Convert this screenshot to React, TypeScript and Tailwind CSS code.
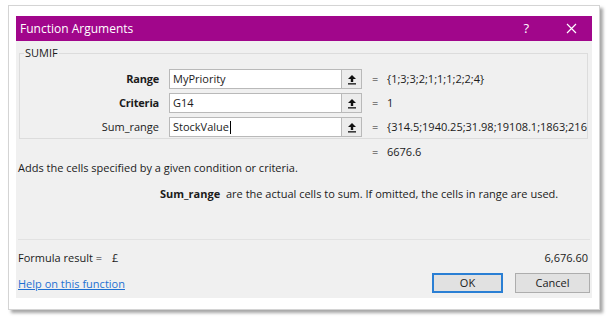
function CollapseIcon() {
  return (
    <svg width="10" height="11" viewBox="0 0 10 11" fill="none">
      <path d="M5 1 L9 5 H6.2 V8 H3.8 V5 H1 Z" fill="#111" />
      <rect x="1" y="9.2" width="8" height="1.3" fill="#111" />
    </svg>
  );
}

const args = [
  { label: "Range", bold: true, value: "MyPriority", result: "{1;3;3;2;1;1;1;2;2;4}", caret: false },
  { label: "Criteria", bold: true, value: "G14", result: "1", caret: false },
  { label: "Sum_range", bold: false, value: "StockValue", result: "{314.5;1940.25;31.98;19108.1;1863;216", caret: true },
];

export default function App() {
  return (
    <div className="h-[318px] w-[609px] overflow-hidden bg-white pl-[8px] pt-[5px] font-['Open_Sans',sans-serif] text-[11px] text-[#1b1b1b]">
      <div className="h-[305px] w-[592px] border border-[#d4d4d4] bg-white pl-[7px] pt-[10px] shadow-[3px_3px_3px_rgba(0,0,0,0.35)]">
        <div className="flex h-[282px] w-[576px] flex-col bg-[#f0f0f0]">
          <div className="flex h-[25px] items-center bg-[#a1068b] pl-[4px] text-[12px] text-white">
            <span>Function Arguments</span>
            <span className="ml-auto mr-[37px] text-[13px]">?</span>
            <svg width="11" height="11" viewBox="0 0 11 11" className="mr-[15px]">
              <path d="M1 1 L10 10 M10 1 L1 10" stroke="#fff" strokeWidth="1.2" />
            </svg>
          </div>

          <fieldset className="ml-[3px] mt-[5px] w-[569px] border border-[#dcdcdc] pb-[1px]">
            <legend className="ml-[4px] px-[1px] leading-[14px]">SUMIF</legend>
            <div className="mt-[9px] flex flex-col gap-[4px]">
              {args.map((a) => (
                <div key={a.label} className="flex h-[20px] items-center">
                  <div className={`w-[139px] text-right ${a.bold ? "font-bold tracking-[-0.2px]" : ""}`}>{a.label}</div>
                  <div className="ml-[10px] flex h-[20px] w-[193px] border border-[#b9b9b9] bg-white">
                    <div className="flex flex-1 items-center pl-[3px]">
                      {a.value}
                      {a.caret && <span className="ml-[1px] h-[13px] w-px bg-black" />}
                    </div>
                    <div className="flex w-[20px] items-center justify-center border-l border-[#b9b9b9] bg-[#ececec]">
                      <CollapseIcon />
                    </div>
                  </div>
                  <div className="ml-[10px] w-[15px]">=</div>
                  <div className="whitespace-nowrap">{a.result}</div>
                </div>
              ))}
            </div>
          </fieldset>

          <div className="mt-[5px] flex h-[16px] items-center pl-[356px]">
            <span className="w-[15px]">=</span>
            <span>6676.6</span>
          </div>
          <div className="flex h-[16px] items-center pl-[2px]">
            Adds the cells specified by a given condition or criteria.
          </div>
          <div className="mt-[10px] flex h-[16px] items-center pl-[144px]">
            <span className="w-[66px] font-bold">Sum_range</span>
            <span>are the actual cells to sum. If omitted, the cells in range are used.</span>
          </div>

          <div className="mx-[2px] mt-[37px] h-px bg-[#e2e2e2]" />

          <div className="mt-[10px] flex h-[16px] items-center px-[2px]">
            <span className="w-[94px]">Formula result =</span>
            <span>£</span>
            <span className="ml-auto pr-[2px]">6,676.60</span>
          </div>

          <div className="mt-[7px] flex items-center pl-[2px] pr-[2px]">
            <a className="mt-[2px] text-[#1f70d2] underline">Help on this function</a>
            <button className="ml-auto h-[20px] w-[71px] border-2 border-[#2a7fd4] bg-[#e1e1e1]">OK</button>
            <button className="ml-[12px] h-[20px] w-[75px] border border-[#adadad] bg-[#e1e1e1]">Cancel</button>
          </div>
        </div>
      </div>
    </div>
  );
}
